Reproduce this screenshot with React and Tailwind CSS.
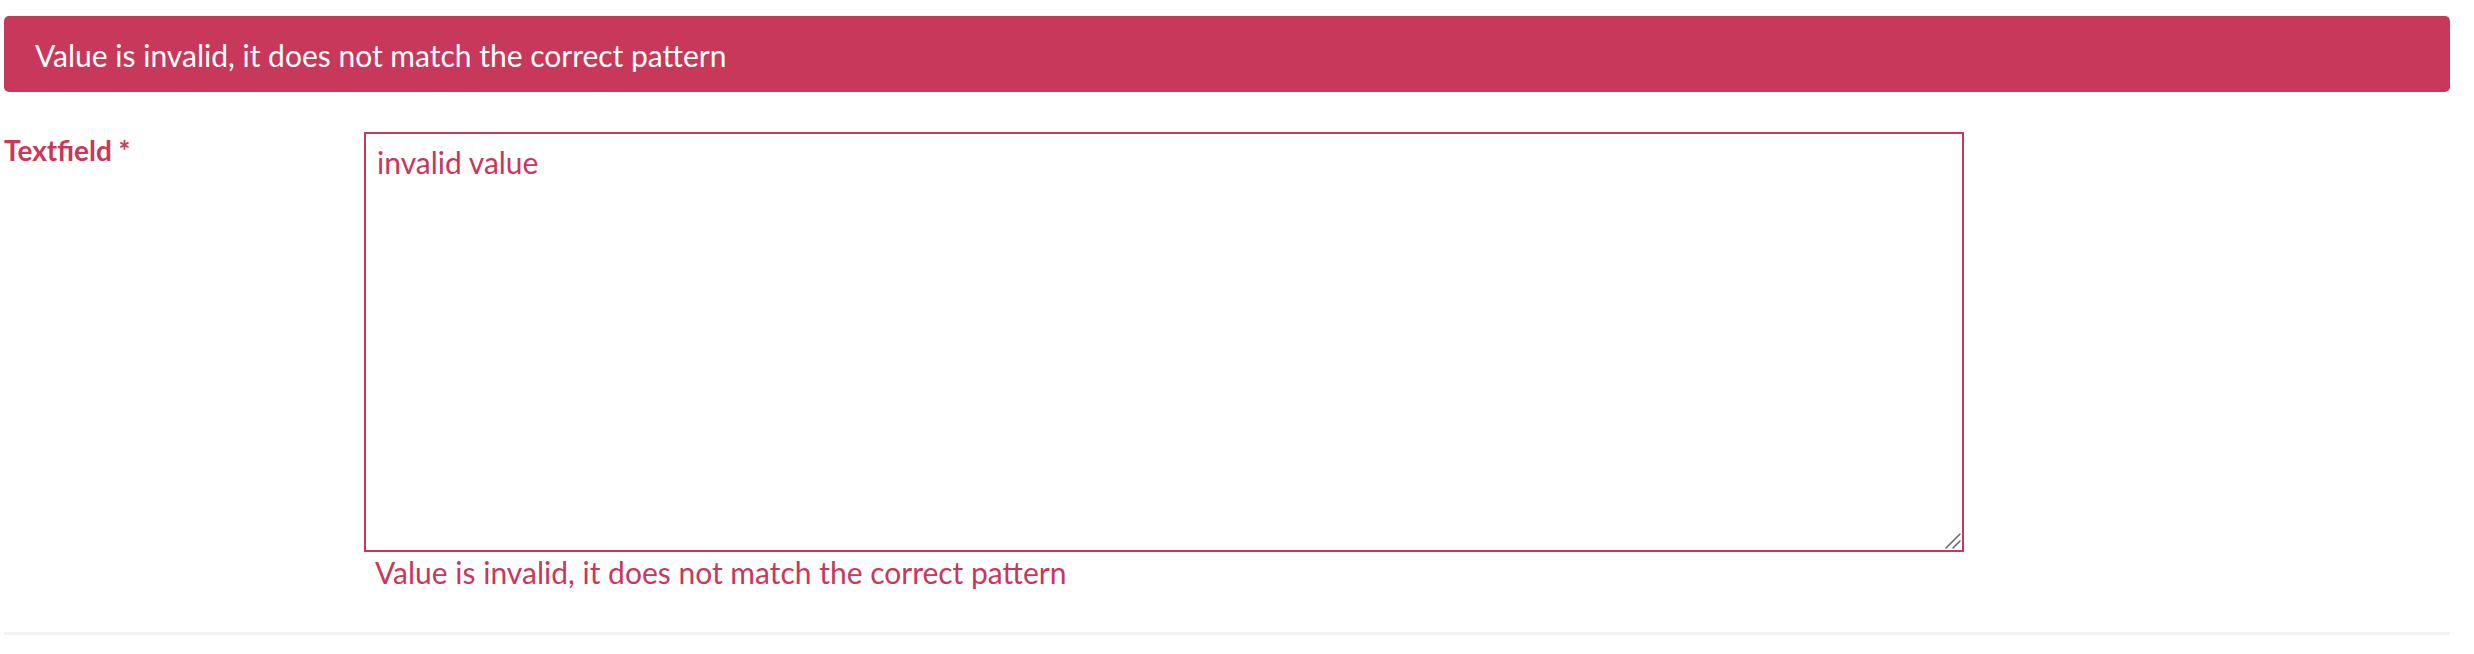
import React from 'react';

const RED = 'text-[#c8385a]';

// resize grip, drawn by hand so it matches the larger grip in the screenshot
const Grip = () => (
    <svg width="18" height="18" viewBox="0 0 18 18" className="pointer-events-none absolute right-[2px] bottom-[2px]">
        <path d="M2 16 L16 2" stroke="#6b6b6b" strokeWidth="1.6" strokeLinecap="round" />
        <path d="M9 16 L16 9" stroke="#6b6b6b" strokeWidth="1.6" strokeLinecap="round" />
    </svg>
);

export default function App() {
    return (
        <div className="min-h-[654px] bg-white pl-[4px] pr-[24px] pt-[16px] font-['Lato','Liberation_Sans',sans-serif]">
            {/* error summary */}
            <div className="h-[76px] rounded-[5px] bg-[#c8385a] pl-[31px] pr-4 pt-[21px]">
                <p className="text-[30px] leading-[1.2] text-white">
                    Value is invalid, it does not match the correct pattern
                </p>
            </div>

            {/* form row */}
            <div className="mt-[40px] flex items-start border-b-[3px] border-[#f2f2f2] pb-[42px]">
                <label className={`w-[360px] shrink-0 pt-[2px] text-[28px] font-bold leading-[1.2] ${RED}`}>
                    Textfield *
                </label>
                <div className="flex flex-col">
                    <div className="relative">
                        <textarea
                            defaultValue="invalid value"
                            className={`block h-[420px] w-[1600px] resize-none border-2 border-[#c8385a] bg-white px-[11px] pt-[10px] text-[30px] leading-[1.2] outline-none ${RED}`}
                        />
                        <Grip />
                    </div>
                    <p className={`mt-[2px] pl-[11px] text-[30px] leading-[1.2] ${RED}`}>
                        Value is invalid, it does not match the correct pattern
                    </p>
                </div>
            </div>
        </div>
    );
}
